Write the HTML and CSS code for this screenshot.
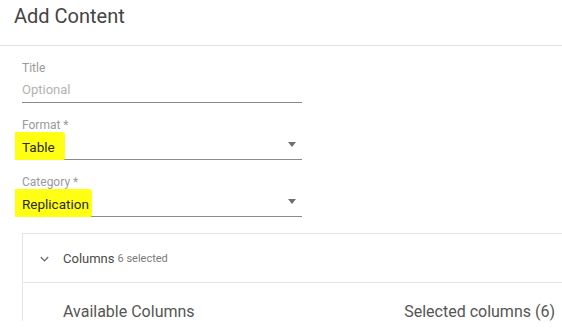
FILE: index.html
```html
<!DOCTYPE html>
<html>
<head>
<meta charset="utf-8">
<link rel="stylesheet" href="styles.css">
</head>
<body>
<div class="dialog">
  <div class="header"><h1 class="title">Add Content</h1></div>
  <div class="content">
    <div class="field">
      <div class="label">Title</div>
      <div class="control"><span class="placeholder">Optional</span></div>
    </div>
    <div class="field">
      <div class="label">Format *</div>
      <div class="control"><span class="value hl hl-table">Table</span><span class="arrow"></span></div>
    </div>
    <div class="field">
      <div class="label">Category *</div>
      <div class="control"><span class="value hl hl-cat">Replication</span><span class="arrow"></span></div>
    </div>
    <div class="panel">
      <div class="panel-head">
        <svg class="chev" width="9" height="6" viewBox="0 0 9 6"><path d="M0.8 1 L4.5 4.8 L8.2 1" fill="none" stroke="#666" stroke-width="1.2"/></svg>
        <span class="panel-title">Columns</span><span class="panel-sub">6 selected</span>
      </div>
      <div class="panel-body">
        <span class="col-title">Available Columns</span>
        <span class="col-title">Selected columns (6)</span>
      </div>
    </div>
  </div>
</div>
</body>
</html>
```
FILE: styles.css
```css
html, body {
  margin: 0;
  padding: 0;
  background: #fff;
  font-family: Roboto, "Liberation Sans", sans-serif;
  overflow: hidden;
}
.dialog {
  width: 562px;
  height: 331px;
}
.header {
  height: 46px;
  border-bottom: 1px solid #e0e0e0;
  padding: 0 14px;
  box-sizing: border-box;
}
.title {
  margin: 0;
  padding-top: 4px;
  font-size: 20px;
  font-weight: 400;
  line-height: 24px;
  color: #444;
}
.content {
  padding-left: 22px;
}
.field {
  width: 280px;
  margin-top: 15px;
}
.label {
  font-size: 12px;
  line-height: 14px;
  color: #9a9a9a;
}
.control {
  display: flex;
  align-items: flex-end;
  justify-content: space-between;
  height: 28px;
  box-sizing: border-box;
  padding-bottom: 4px;
  border-bottom: 1px solid #8a8a8a;
  position: relative;
  z-index: 0;
}
.placeholder {
  font-size: 13px;
  line-height: 16px;
  color: #b3b3b3;
}
.value {
  font-size: 13.5px;
  line-height: 16px;
  color: #2a2a2a;
}
.hl {
  position: relative;
}
.hl::before {
  content: "";
  position: absolute;
  z-index: -1;
  background: #ffff14;
  left: -7px;
  top: -7px;
  bottom: -5px;
  border-radius: 1px 3px 2px 1px;
}
.hl-table::before {
  right: -10px;
}
.hl-cat::before {
  right: -3px;
}
.arrow {
  align-self: center;
  width: 0;
  height: 0;
  border-left: 4.5px solid transparent;
  border-right: 4.5px solid transparent;
  border-top: 5px solid #707070;
  margin: 1px 6px 0 0;
}
.panel {
  margin-top: 16px;
  border-top: 1px solid #e6e6e6;
  border-left: 1px solid #e6e6e6;
}
.panel-head {
  height: 48px;
  display: flex;
  align-items: center;
  border-bottom: 1px solid #e6e6e6;
  padding-left: 17px;
}
.chev {
  margin-right: 14px;
  margin-top: 2px;
}
.panel-title {
  font-size: 13px;
  color: #4a4a4a;
}
.panel-sub {
  font-size: 11px;
  color: #7a7a7a;
  margin-left: 3px;
  margin-top: 1px;
}
.panel-body {
  display: flex;
  justify-content: space-between;
  padding: 19px 7px 0 40px;
}
.col-title {
  font-size: 16px;
  line-height: 19px;
  color: #555;
}
```
